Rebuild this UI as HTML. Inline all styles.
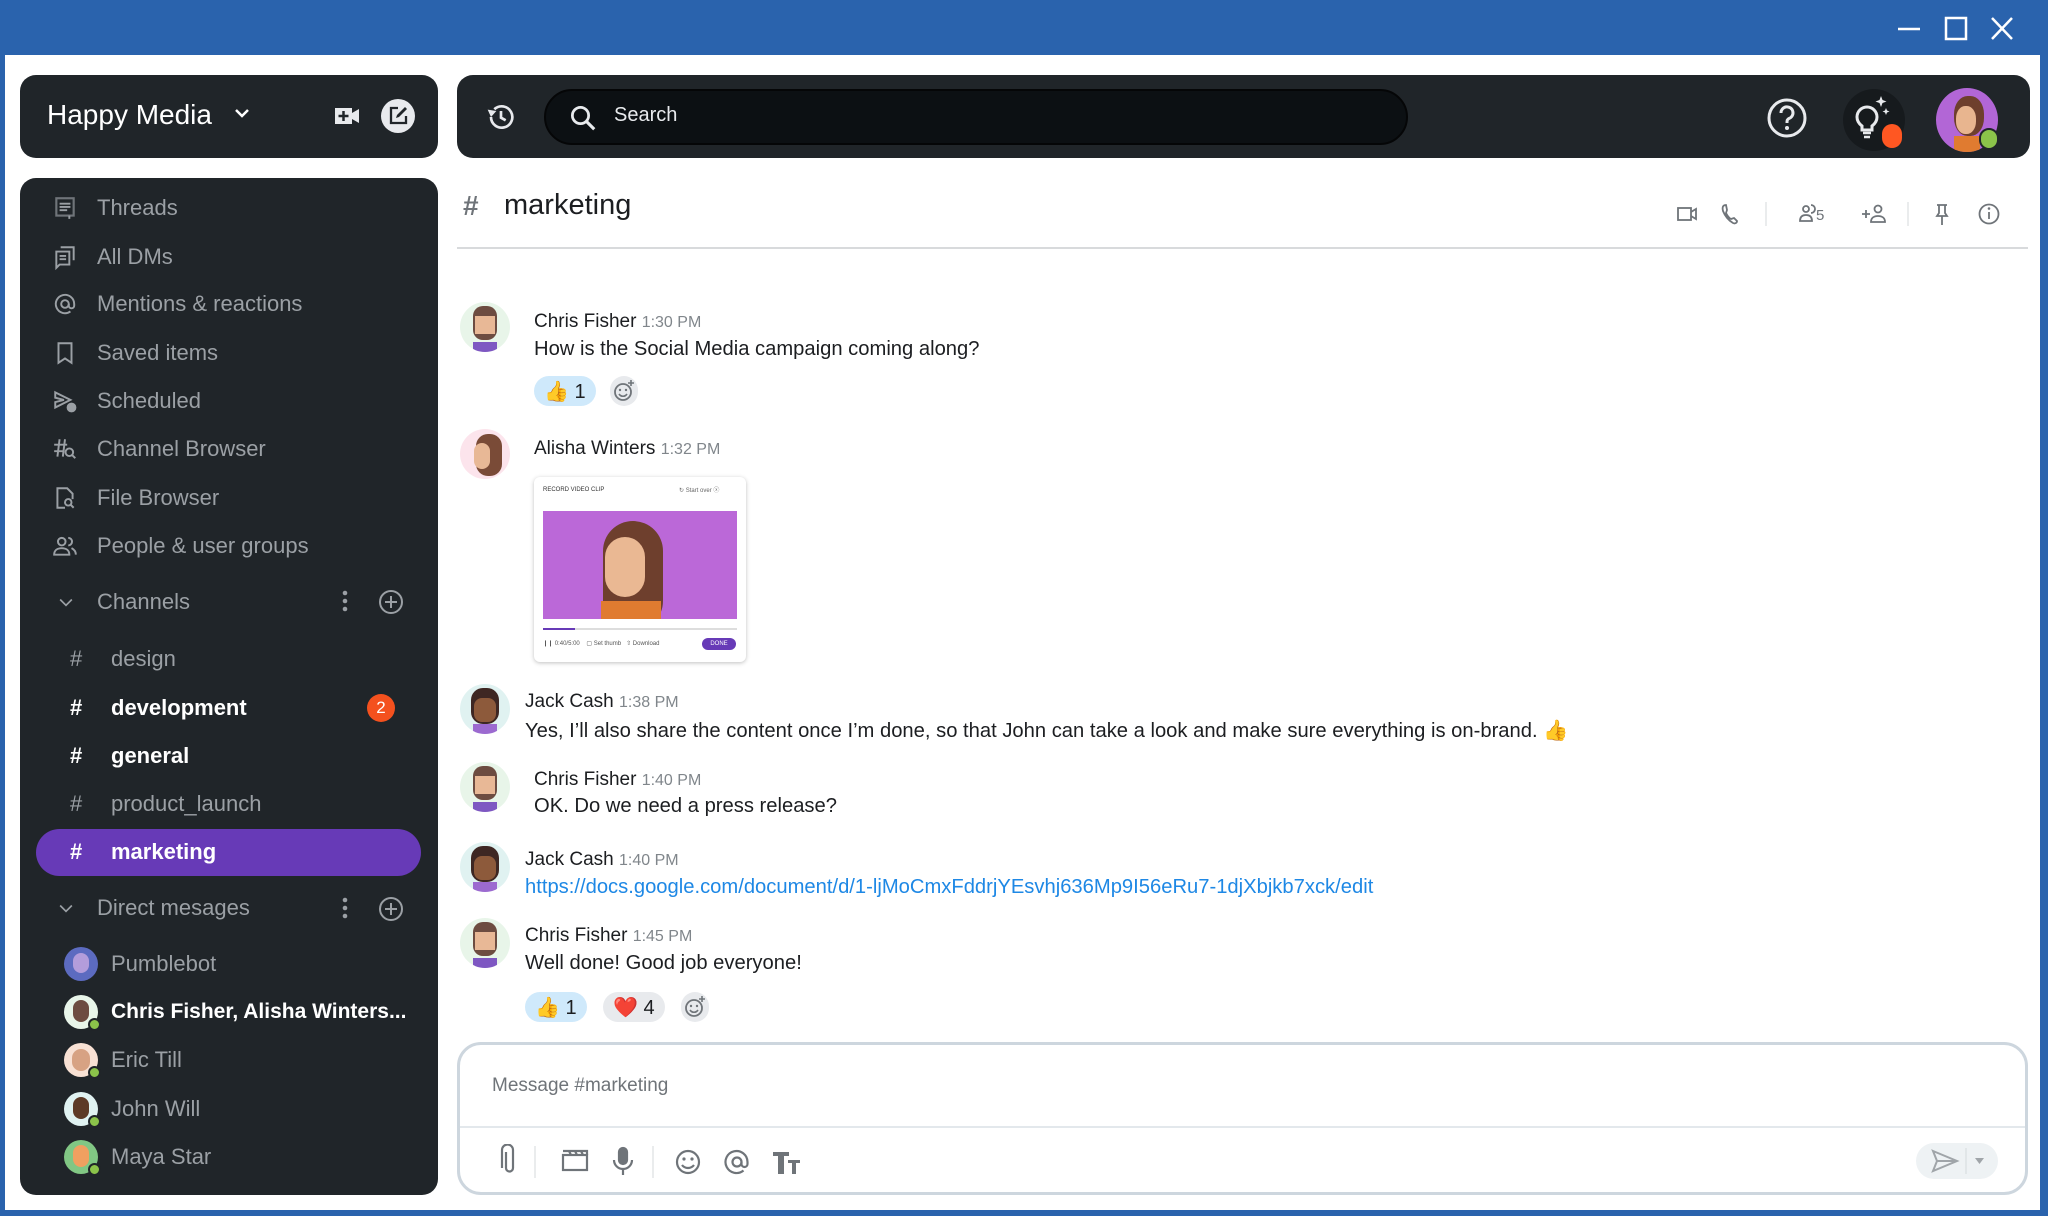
<!DOCTYPE html>
<html><head><meta charset="utf-8"><style>
*{margin:0;padding:0;box-sizing:border-box}
body{width:2048px;height:1216px;background:#2a63ad;font-family:"Liberation Sans",Arial,sans-serif;position:relative;overflow:hidden}
.a{position:absolute}
.win{left:5px;top:55px;width:2035px;height:1155px;background:#fff}
.card{background:#202529;border-radius:16px}
.si{position:absolute;left:52px;font-size:22px;color:#9ba0a5;display:flex;align-items:center;height:30px}
.si svg{width:26px;height:26px;margin-right:19px}
.ch{position:absolute;left:70px;font-size:22px;color:#9ba0a5;height:30px;display:flex;align-items:center}
.ch b.h{width:41px;font-weight:bold;font-size:22px}
.ch.w{color:#fff;font-weight:bold}
.dm{position:absolute;left:64px;font-size:22px;color:#9ba0a5;height:34px;display:flex;align-items:center}
.av{width:34px;height:34px;border-radius:50%;margin-right:13px;position:relative}
.dot{position:absolute;right:-3px;bottom:-2px;width:13px;height:13px;border-radius:50%;background:#8bc34a;border:2px solid #202529}
.name{position:absolute;font-size:19px;color:#1c1e21}
.name span{color:#80868b;font-size:16px}
.txt{position:absolute;font-size:20.2px;color:#1c1e21}
.mav{position:absolute;width:50px;height:50px;border-radius:50%;overflow:hidden}
.rx{position:absolute;height:30px;border-radius:15px;background:#cfe9fb;font-size:20px;display:flex;align-items:center;padding:0 10px;color:#1c1e21}
.rg{background:#e8eaed}
.add{position:absolute;width:28px;height:30px;border-radius:14px;background:#e8eaed}
.gi{stroke:#6f7479;fill:none;stroke-width:2}
</style></head><body>
<svg class="a" style="left:1895px;top:14px" width="130" height="28" viewBox="0 0 130 28"><g stroke="#fff" stroke-width="2.5" fill="none"><line x1="3" y1="15" x2="25" y2="15"/><rect x="51" y="4" width="20" height="21"/><line x1="97" y1="4" x2="117" y2="25"/><line x1="117" y1="4" x2="97" y2="25"/></g></svg>
<div class="a win"></div>

<div class="a card" style="left:20px;top:75px;width:418px;height:83px"></div>
<div class="a" style="left:47px;top:99px;font-size:28px;color:#fff">Happy Media</div>
<svg class="a" style="left:233px;top:107px" width="18" height="14"><path d="M3 3l6 6 6-6" stroke="#fff" stroke-width="2.5" fill="none"/></svg>
<svg class="a" style="left:333px;top:104px" width="28" height="24"><rect x="2" y="4" width="17" height="16" fill="#e8eaed"/><path d="M19 9l7-4v14l-7-4z" fill="#e8eaed"/><path d="M10.5 7v10M5.5 12h10" stroke="#202529" stroke-width="2.5"/></svg>
<div class="a" style="left:381px;top:99px;width:34px;height:34px;border-radius:50%;background:#e8eaed"></div>
<svg class="a" style="left:387px;top:105px" width="22" height="22"><path d="M11 3H4v15h15v-7" stroke="#202529" stroke-width="2.3" fill="none"/><path d="M9 13l1-3 8-8 2 2-8 8z" fill="#202529"/></svg>

<div class="a card" style="left:457px;top:75px;width:1573px;height:83px"></div>
<svg class="a" style="left:485px;top:101px" width="32" height="32" viewBox="0 0 24 24"><path d="M4.5 12a8 8 0 1 0 2.5-5.8" stroke="#e8eaed" stroke-width="2" fill="none"/><path d="M2 6.5l2.5 5.5 4-4.5z" fill="#e8eaed"/><path d="M12 7.5v5l3.5 2" stroke="#e8eaed" stroke-width="2" fill="none"/></svg>
<div class="a" style="left:544px;top:89px;width:864px;height:56px;border-radius:28px;background:#0c1013;border:2px solid #050607"></div>
<svg class="a" style="left:568px;top:103px" width="30" height="30" viewBox="0 0 24 24"><circle cx="10" cy="10" r="6.5" stroke="#e8eaed" stroke-width="2.2" fill="none"/><path d="M15 15l6 6" stroke="#e8eaed" stroke-width="2.5"/></svg>
<div class="a" style="left:614px;top:104px;font-size:20px;color:#e8eaed">Search</div>
<svg class="a" style="left:1765px;top:96px" width="44" height="44" viewBox="0 0 44 44"><circle cx="22" cy="22" r="18" stroke="#e8eaed" stroke-width="3" fill="none"/><path d="M16 17a6 6 0 1 1 8 5.5c-2 1-2 2-2 4.5" stroke="#e8eaed" stroke-width="3" fill="none"/><circle cx="22" cy="32" r="2" fill="#e8eaed"/></svg>
<div class="a" style="left:1843px;top:89px;width:62px;height:62px;border-radius:50%;background:#161a1d"></div>
<svg class="a" style="left:1848px;top:92px" width="50" height="50" viewBox="0 0 50 50"><path d="M14 38v-4c-4-3-5-6-5-9a10 10 0 0 1 20 0c0 3-1 6-5 9v4z" stroke="#e8eaed" stroke-width="3" fill="none"/><path d="M15 41h8M16 45h6" stroke="#e8eaed" stroke-width="2.5"/><path d="M33 4l1.5 4 4 1.5-4 1.5-1.5 4-1.5-4-4-1.5 4-1.5zM38 16l1 2.5 2.5 1-2.5 1-1 2.5-1-2.5-2.5-1 2.5-1z" fill="#e8eaed"/></svg>
<div class="a" style="left:1882px;top:124px;width:20px;height:24px;border-radius:10px;background:#ff5722"></div>
<div class="a" style="left:1936px;top:88px;width:62px;height:64px;border-radius:50%;background:#b266d6;overflow:hidden"><div style="position:absolute;left:18px;top:8px;width:30px;height:40px;border-radius:45%;background:#6e3f2d"></div><div style="position:absolute;left:20px;top:18px;width:20px;height:28px;border-radius:45%;background:#e8b58f"></div><div style="position:absolute;left:18px;top:48px;width:26px;height:20px;background:#e07b30"></div></div>
<div class="a" style="left:1979px;top:128px;width:20px;height:22px;border-radius:10px;background:#8bc34a;border:2px solid #202529"></div>

<div class="a card" style="left:20px;top:178px;width:418px;height:1017px"></div>
<div class="si" style="top:193px"><svg viewBox="0 0 24 24"><rect x="4" y="3" width="16" height="16" class="gi" stroke="#9ba0a5"/><path d="M7 8h10M7 11h10M7 14h7M16 19v3" stroke="#9ba0a5" stroke-width="1.8"/></svg>Threads</div>
<div class="si" style="top:242px"><svg viewBox="0 0 24 24"><path d="M4 7h12v12H7l-3 3zM8 3h12v12" stroke="#9ba0a5" stroke-width="1.8" fill="none"/><path d="M7 11h6M7 14h6" stroke="#9ba0a5" stroke-width="1.8"/></svg>All DMs</div>
<div class="si" style="top:289px"><svg viewBox="0 0 24 24"><circle cx="12" cy="12" r="3.5" stroke="#9ba0a5" stroke-width="1.8" fill="none"/><path d="M15.5 12v1.5a2.5 2.5 0 0 0 5 0V12a8.5 8.5 0 1 0-3.5 6.9" stroke="#9ba0a5" stroke-width="1.8" fill="none"/></svg>Mentions &amp; reactions</div>
<div class="si" style="top:338px"><svg viewBox="0 0 24 24"><path d="M6 3h12v18l-6-4-6 4z" stroke="#9ba0a5" stroke-width="1.8" fill="none"/></svg>Saved items</div>
<div class="si" style="top:386px"><svg viewBox="0 0 24 24"><path d="M3 4l14 7-14 7v-5l8-2-8-2z" stroke="#9ba0a5" stroke-width="1.8" fill="none"/><circle cx="18" cy="18" r="4.5" fill="#9ba0a5"/></svg>Scheduled</div>
<div class="si" style="top:434px"><svg viewBox="0 0 24 24"><path d="M7 3l-2 16M12 3l-2 16M2 8h12M2 14h8" stroke="#9ba0a5" stroke-width="1.8"/><circle cx="16" cy="15" r="3.5" stroke="#9ba0a5" stroke-width="1.8" fill="none"/><path d="M18.5 17.5l3 3" stroke="#9ba0a5" stroke-width="1.8"/></svg>Channel Browser</div>
<div class="si" style="top:483px"><svg viewBox="0 0 24 24"><path d="M12 21H5V3h9l5 5v5" stroke="#9ba0a5" stroke-width="1.8" fill="none"/><circle cx="15" cy="16" r="3" stroke="#9ba0a5" stroke-width="1.8" fill="none"/><path d="M17 18l3 3" stroke="#9ba0a5" stroke-width="1.8"/></svg>File Browser</div>
<div class="si" style="top:531px"><svg viewBox="0 0 24 24"><circle cx="9" cy="8" r="3.5" stroke="#9ba0a5" stroke-width="1.8" fill="none"/><path d="M2 20c0-4 3-6 7-6s7 2 7 6zM15 4.5a3.5 3.5 0 0 1 0 7M18 14c2 1 4 3 4 6" stroke="#9ba0a5" stroke-width="1.8" fill="none"/></svg>People &amp; user groups</div>

<div class="si" style="top:587px;left:56px"><svg viewBox="0 0 24 24" style="width:20px;height:20px;margin-right:21px"><path d="M5 9l7 7 7-7" stroke="#9ba0a5" stroke-width="2" fill="none"/></svg>Channels</div>
<svg class="a" style="left:341px;top:588px" width="8" height="26"><circle cx="4" cy="5" r="2.3" fill="#9ba0a5"/><circle cx="4" cy="13" r="2.3" fill="#9ba0a5"/><circle cx="4" cy="21" r="2.3" fill="#9ba0a5"/></svg>
<svg class="a" style="left:378px;top:589px" width="26" height="26"><circle cx="13" cy="13" r="11" stroke="#9ba0a5" stroke-width="2" fill="none"/><path d="M13 7v12M7 13h12" stroke="#9ba0a5" stroke-width="2"/></svg>

<div class="ch" style="top:644px"><b class="h" style="font-weight:normal">#</b>design</div>
<div class="ch w" style="top:693px"><b class="h">#</b>development</div>
<div class="a" style="left:367px;top:694px;width:28px;height:28px;border-radius:50%;background:#f4511e;color:#fff;font-size:17px;text-align:center;line-height:28px">2</div>
<div class="ch w" style="top:741px"><b class="h">#</b>general</div>
<div class="ch" style="top:789px"><b class="h" style="font-weight:normal">#</b>product_launch</div>
<div class="a" style="left:36px;top:829px;width:385px;height:47px;border-radius:24px;background:#673ab7"></div>
<div class="ch w" style="top:837px"><b class="h">#</b>marketing</div>

<div class="si" style="top:893px;left:56px"><svg viewBox="0 0 24 24" style="width:20px;height:20px;margin-right:21px"><path d="M5 9l7 7 7-7" stroke="#9ba0a5" stroke-width="2" fill="none"/></svg>Direct mesages</div>
<svg class="a" style="left:341px;top:895px" width="8" height="26"><circle cx="4" cy="5" r="2.3" fill="#9ba0a5"/><circle cx="4" cy="13" r="2.3" fill="#9ba0a5"/><circle cx="4" cy="21" r="2.3" fill="#9ba0a5"/></svg>
<svg class="a" style="left:378px;top:896px" width="26" height="26"><circle cx="13" cy="13" r="11" stroke="#9ba0a5" stroke-width="2" fill="none"/><path d="M13 7v12M7 13h12" stroke="#9ba0a5" stroke-width="2"/></svg>

<div class="dm" style="top:947px"><div class="av" style="background:#5c6bc0"><div style="position:absolute;left:9px;top:6px;width:16px;height:20px;border-radius:8px;background:#b39ddb"></div></div>Pumblebot</div>
<div class="dm" style="top:995px;color:#fff;font-weight:bold;font-size:21px"><div class="av" style="background:#e8f5e9"><div style="position:absolute;left:9px;top:5px;width:16px;height:22px;border-radius:8px;background:#6d4c41"></div><div class="dot"></div></div>Chris Fisher, Alisha Winters...</div>
<div class="dm" style="top:1043px"><div class="av" style="background:#f8e1d4"><div style="position:absolute;left:8px;top:6px;width:18px;height:22px;border-radius:9px;background:#d7a283"></div><div class="dot"></div></div>Eric Till</div>
<div class="dm" style="top:1092px"><div class="av" style="background:#e0f2f1"><div style="position:absolute;left:9px;top:5px;width:16px;height:22px;border-radius:8px;background:#5d3a26"></div><div class="dot"></div></div>John Will</div>
<div class="dm" style="top:1140px"><div class="av" style="background:#81c784"><div style="position:absolute;left:9px;top:5px;width:16px;height:22px;border-radius:8px;background:#f0a060"></div><div class="dot"></div></div>Maya Star</div>

<div class="a" style="left:463px;top:190px;font-size:28px;color:#6f7479;font-weight:bold">#</div>
<div class="a" style="left:504px;top:189px;font-size:29px;color:#1c1e21">marketing</div>
<div class="a" style="left:457px;top:247px;width:1571px;height:2px;background:#d8dadc"></div>
<svg class="a" style="left:1676px;top:202px" width="330" height="24" viewBox="0 0 330 24">
<g stroke="#6f7479" stroke-width="1.8" fill="none">
<rect x="2" y="6" width="13" height="12"/><path d="M15 10l5-3v10l-5-3"/>
<path d="M50 3c-3 0-4 2-3 6 2 5 5 9 10 12 2 1 4 0 4-2l-3-3-3 1c-2-1-4-4-5-6l1-3z"/>
<circle cx="130" cy="7" r="3"/><path d="M124 19c0-4 2-6 6-6s6 2 6 6zM135 3a4 4 0 0 1 0 8"/>
<circle cx="202" cy="7" r="3.5"/><path d="M195 20c0-4 3-6 7-6s7 2 7 6zM186 12h8M190 8v8"/>
<path d="M261 3h10M263 3v8l-2 3h10l-2-3V3M266 14v9"/>
<circle cx="313" cy="12" r="9.5"/><path d="M313 10v7"/>
</g><circle cx="313" cy="6.5" r="1.3" fill="#6f7479"/><line x1="90" y1="-4" x2="90" y2="28" stroke="#e3e5e7" stroke-width="1.5"/><line x1="232" y1="-4" x2="232" y2="28" stroke="#e3e5e7" stroke-width="1.5"/>
<text x="140" y="18" font-size="15" fill="#6f7479" font-family="Liberation Sans">5</text></svg>

<div class="mav" style="left:460px;top:302px;background:#e8f5e9"><div style="position:absolute;left:13px;top:4px;width:24px;height:34px;border-radius:10px;background:#6d4c41"></div><div style="position:absolute;left:15px;top:14px;width:20px;height:18px;background:#e8b896"></div><div style="position:absolute;left:13px;top:40px;width:24px;height:12px;background:#7e57c2"></div></div>
<div class="name" style="left:534px;top:311px">Chris Fisher <span>1:30 PM</span></div>
<div class="txt" style="left:534px;top:338px">How is the Social Media campaign coming along?</div>
<div class="rx" style="left:534px;top:376px">👍 1</div>
<div class="add" style="left:610px;top:376px"></div>

<div class="mav" style="left:460px;top:429px;background:#fce4ec"><div style="position:absolute;left:16px;top:5px;width:26px;height:42px;border-radius:12px;background:#7a4b37"></div><div style="position:absolute;left:14px;top:14px;width:16px;height:26px;border-radius:8px;background:#e8b896"></div></div>
<div class="name" style="left:534px;top:438px">Alisha Winters <span>1:32 PM</span></div>
<div class="a" style="left:534px;top:477px;width:212px;height:185px;border-radius:6px;background:#fff;box-shadow:0 1px 4px rgba(0,0,0,.25)">
 <div style="position:absolute;left:9px;top:10px;font-size:6px;color:#333">RECORD VIDEO CLIP</div>
 <div style="position:absolute;left:145px;top:8px;font-size:6px;color:#666">↻ Start over ⓧ</div>
 <div style="position:absolute;left:9px;top:34px;width:194px;height:108px;background:#bb68d8;overflow:hidden"><div style="position:absolute;left:60px;top:10px;width:60px;height:110px;border-radius:30px;background:#6e3f2d"></div><div style="position:absolute;left:62px;top:26px;width:40px;height:60px;border-radius:20px;background:#eab893"></div><div style="position:absolute;left:58px;top:90px;width:60px;height:30px;background:#e07b30"></div></div>
 <div style="position:absolute;left:9px;top:151px;width:194px;height:2px;background:#ddd"><div style="width:32px;height:2px;background:#673ab7"></div></div>
 <div style="position:absolute;left:9px;top:163px;font-size:6px;color:#555">❙❙ 0:40/5:00 &nbsp;&nbsp; ▢ Set thumb &nbsp; ⇧ Download</div>
 <div style="position:absolute;left:168px;top:161px;width:34px;height:12px;border-radius:6px;background:#673ab7;color:#fff;font-size:6px;text-align:center;line-height:12px">DONE</div>
</div>

<div class="mav" style="left:460px;top:684px;background:#e0f2f1"><div style="position:absolute;left:11px;top:4px;width:28px;height:36px;border-radius:12px;background:#3e2723"></div><div style="position:absolute;left:14px;top:14px;width:22px;height:24px;border-radius:8px;background:#8d5a3b"></div><div style="position:absolute;left:13px;top:40px;width:24px;height:12px;background:#9c6ad0"></div></div>
<div class="name" style="left:525px;top:691px">Jack Cash <span>1:38 PM</span></div>
<div class="txt" style="left:525px;top:718px">Yes, I’ll also share the content once I’m done, so that John can take a look and make sure everything is on-brand. 👍</div>

<div class="mav" style="left:460px;top:762px;background:#e8f5e9"><div style="position:absolute;left:13px;top:4px;width:24px;height:34px;border-radius:10px;background:#6d4c41"></div><div style="position:absolute;left:15px;top:14px;width:20px;height:18px;background:#e8b896"></div><div style="position:absolute;left:13px;top:40px;width:24px;height:12px;background:#7e57c2"></div></div>
<div class="name" style="left:534px;top:769px">Chris Fisher <span>1:40 PM</span></div>
<div class="txt" style="left:534px;top:795px">OK. Do we need a press release?</div>

<div class="mav" style="left:460px;top:842px;background:#e0f2f1"><div style="position:absolute;left:11px;top:4px;width:28px;height:36px;border-radius:12px;background:#3e2723"></div><div style="position:absolute;left:14px;top:14px;width:22px;height:24px;border-radius:8px;background:#8d5a3b"></div><div style="position:absolute;left:13px;top:40px;width:24px;height:12px;background:#9c6ad0"></div></div>
<div class="name" style="left:525px;top:849px">Jack Cash <span>1:40 PM</span></div>
<div class="txt" style="left:525px;top:876px;color:#1e88e5">https://docs.google.com/document/d/1-ljMoCmxFddrjYEsvhj636Mp9I56eRu7-1djXbjkb7xck/edit</div>

<div class="mav" style="left:460px;top:918px;background:#e8f5e9"><div style="position:absolute;left:13px;top:4px;width:24px;height:34px;border-radius:10px;background:#6d4c41"></div><div style="position:absolute;left:15px;top:14px;width:20px;height:18px;background:#e8b896"></div><div style="position:absolute;left:13px;top:40px;width:24px;height:12px;background:#7e57c2"></div></div>
<div class="name" style="left:525px;top:925px">Chris Fisher <span>1:45 PM</span></div>
<div class="txt" style="left:525px;top:952px">Well done! Good job everyone!</div>
<div class="rx" style="left:525px;top:992px">👍 1</div>
<div class="rx rg" style="left:603px;top:992px">❤️ 4</div>
<div class="add" style="left:681px;top:992px"></div>
<svg class="a" style="left:612px;top:378px" width="24" height="26" viewBox="0 0 24 26"><circle cx="11" cy="14" r="8" stroke="#6f7479" stroke-width="1.8" fill="none"/><circle cx="8" cy="12" r="1.2" fill="#6f7479"/><circle cx="14" cy="12" r="1.2" fill="#6f7479"/><path d="M7 16c2 3 6 3 8 0M19 2v6M16 5h6" stroke="#6f7479" stroke-width="1.6" fill="none"/></svg>
<svg class="a" style="left:683px;top:994px" width="24" height="26" viewBox="0 0 24 26"><circle cx="11" cy="14" r="8" stroke="#6f7479" stroke-width="1.8" fill="none"/><circle cx="8" cy="12" r="1.2" fill="#6f7479"/><circle cx="14" cy="12" r="1.2" fill="#6f7479"/><path d="M7 16c2 3 6 3 8 0M19 2v6M16 5h6" stroke="#6f7479" stroke-width="1.6" fill="none"/></svg>

<div class="a" style="left:457px;top:1042px;width:1571px;height:153px;border:3px solid #cdd6de;border-radius:24px;background:#fff"></div>
<div class="a" style="left:460px;top:1126px;width:1565px;height:2px;background:#e3e8ec"></div>
<div class="a" style="left:492px;top:1075px;font-size:19px;color:#6f7479">Message #marketing</div>
<svg class="a" style="left:494px;top:1144px" width="310" height="34" viewBox="0 0 310 34">
<g stroke="#6f7479" stroke-width="2.2" fill="none">
<path d="M12 8v16a3.5 3.5 0 0 0 7 0V6a5.5 5.5 0 0 0-11 0v18"/>
<rect x="69" y="11" width="24" height="15"/><path d="M69 7h24v4M75 7l2 4M81 7l2 4M87 7l2 4"/>
<rect x="125" y="4" width="8" height="16" rx="4" fill="#6f7479"/><path d="M120 16a9 9 0 0 0 18 0M129 25v6"/>
<circle cx="194" cy="18" r="11"/><path d="M188 21c3 4 9 4 12 0"/>
<circle cx="243" cy="18" r="4.5"/><path d="M247.5 18v2a3 3 0 0 0 6 0v-2a11 11 0 1 0-4 8.5"/>
</g>
<circle cx="190" cy="15" r="1.6" fill="#6f7479"/><circle cx="198" cy="15" r="1.6" fill="#6f7479"/>
<path d="M279 8h16v4h-5v18h-6V12h-5zM294 16h12v3h-4v11h-4V19h-4z" fill="#6f7479"/>
<line x1="41" y1="2" x2="41" y2="34" stroke="#e3e5e7" stroke-width="1.5"/><line x1="159" y1="2" x2="159" y2="34" stroke="#e3e5e7" stroke-width="1.5"/>
</svg>
<div class="a" style="left:1916px;top:1143px;width:82px;height:36px;border-radius:18px;background:#eef2f4"></div>
<svg class="a" style="left:1930px;top:1148px" width="60" height="26" viewBox="0 0 60 26"><path d="M3 3l24 10-24 10 4-10z" stroke="#a0a5a9" stroke-width="2" fill="none"/><path d="M7 13h20" stroke="#a0a5a9" stroke-width="2"/><line x1="36" y1="-2" x2="36" y2="28" stroke="#dde2e5" stroke-width="1.5"/><path d="M45 10h9l-4.5 6z" fill="#a0a5a9"/></svg>
</body></html>
